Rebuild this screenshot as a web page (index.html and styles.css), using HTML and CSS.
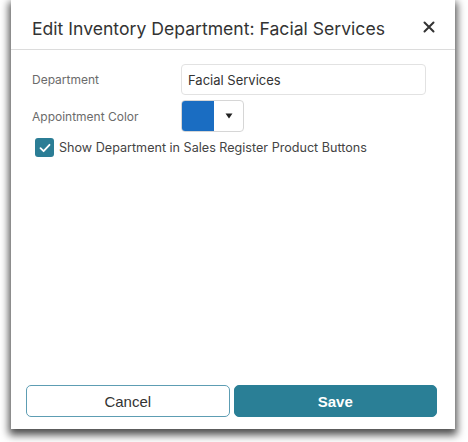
FILE: index.html
```html
<!DOCTYPE html>
<html>
<head>
<meta charset="utf-8">
<link rel="stylesheet" href="styles.css">
</head>
<body>
<div class="dialog">
  <div class="header">
    <div class="title">Edit Inventory Department: Facial Services</div>
    <div class="close">
      <svg width="12" height="12" viewBox="0 0 12 12"><path d="M1.5 1.5 L10.5 10.5 M10.5 1.5 L1.5 10.5" stroke="#333" stroke-width="2" stroke-linecap="round"/></svg>
    </div>
  </div>
  <div class="body">
    <div class="row">
      <div class="label">Department</div>
      <div class="input">Facial Services</div>
    </div>
    <div class="row row-color">
      <div class="label">Appointment Color</div>
      <div class="picker">
        <div class="swatch"></div>
        <div class="caret">
          <svg width="8" height="6" viewBox="0 0 8 6"><path d="M0.5 0.5 H7.5 L4 5.5 Z" fill="#222"/></svg>
        </div>
      </div>
    </div>
    <div class="check-row">
      <div class="checkbox">
        <svg width="12" height="10" viewBox="0 0 12 10"><path d="M1.5 5.2 L4.6 8.2 L10.5 1.8" fill="none" stroke="#fff" stroke-width="1.8" stroke-linecap="round" stroke-linejoin="round"/></svg>
      </div>
      <div class="check-label">Show Department in Sales Register Product Buttons</div>
    </div>
  </div>
  <div class="footer">
    <button class="btn btn-cancel">Cancel</button>
    <button class="btn btn-save">Save</button>
  </div>
</div>
</body>
</html>
```
FILE: styles.css
```css
html, body {
  margin: 0;
  padding: 0;
  background: #ffffff;
}
body {
  font-family: Inter, "Noto Sans", sans-serif;
  width: 468px;
  height: 442px;
  overflow: hidden;
}
.dialog {
  margin-left: 11px;
  width: 444px;
  height: 429px;
  background: #fff;
  box-shadow: 0 4px 8px 2px rgba(0, 0, 0, 0.7);
  display: flex;
  flex-direction: column;
}
.header {
  height: 50px;
  border-bottom: 1px solid #dcdcdc;
  box-sizing: border-box;
  display: flex;
  align-items: center;
  padding: 0 20px 0 21px;
  justify-content: space-between;
}
.title {
  font-size: 17.6px;
  color: #333;
  padding-top: 7px;
}
.close {
  width: 12px;
  height: 12px;
  display: flex;
  margin-top: 4px;
}
.body {
  flex: 1;
  padding: 14px 0 0 21px;
  display: flex;
  flex-direction: column;
}
.row {
  display: flex;
  align-items: center;
}
.label {
  width: 149px;
  font-size: 12px;
  color: #6b6b6b;
}
.input {
  width: 245px;
  height: 31px;
  box-sizing: border-box;
  border: 1px solid #e2e2e2;
  border-radius: 4px;
  font-size: 13px;
  color: #333;
  padding: 0 6px;
  display: flex;
  align-items: center;
}
.row-color {
  margin-top: 5px;
}
.picker {
  width: 63px;
  height: 32px;
  box-sizing: border-box;
  border: 1px solid #d6d6d6;
  border-radius: 4px;
  display: flex;
  overflow: hidden;
}
.swatch {
  width: 32px;
  background: #1a6dc2;
}
.caret {
  flex: 1;
  display: flex;
  align-items: center;
  justify-content: center;
}
.check-row {
  display: flex;
  align-items: center;
  margin-top: 6px;
  margin-left: 3px;
}
.checkbox {
  width: 19px;
  height: 19px;
  border-radius: 3px;
  background: #2b7d95;
  display: flex;
  align-items: center;
  justify-content: center;
}
.check-label {
  font-size: 12.6px;
  color: #444;
  margin-left: 5px;
}
.footer {
  display: flex;
  gap: 4px;
  padding: 0 18px 12px 15px;
}
.btn {
  flex: 1;
  height: 32px;
  border-radius: 5px;
  font-family: "Liberation Sans", Arial, sans-serif;
  font-size: 15px;
  cursor: pointer;
}
.btn-cancel {
  background: #fff;
  border: 1px solid #5d9db3;
  color: #333;
}
.btn-save {
  background: #2a7f96;
  border: 1px solid #2a7f96;
  color: #fff;
  font-weight: bold;
}
```
